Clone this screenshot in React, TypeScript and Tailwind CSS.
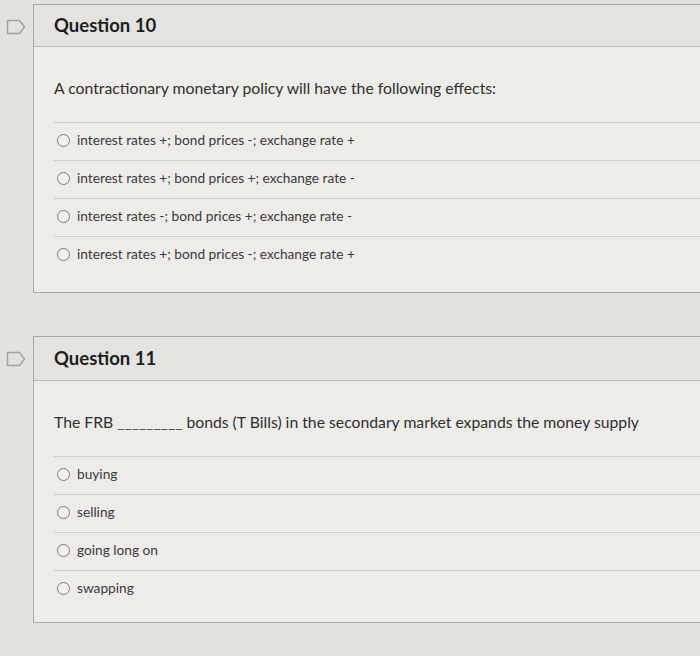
import React from "react"

interface QuestionProps {
  title: string
  prompt: React.ReactNode
  options: string[]
  headerH: string
  bottomPad: string
}

function Flag() {
  return (
    <svg width="20" height="16" viewBox="0 0 20 16" className="block">
      <path
        d="M1.5 1.5 H13.5 L18.5 8 L13.5 14.5 H1.5 Z"
        fill="none"
        stroke="#a3a3a1"
        strokeWidth="1.5"
        strokeLinejoin="round"
      />
    </svg>
  )
}

function Question({ title, prompt, options, headerH, bottomPad }: QuestionProps) {
  return (
    <div className="flex">
      {/* flag column */}
      <div className="w-[33px] shrink-0 pl-[6px] pt-[15px]">
        <Flag />
      </div>

      <div className="flex-1 border border-r-0 border-[#a9a9a6] bg-[#edece9]">
        <div className={`${headerH} flex items-center pl-[20px] bg-[#e4e3e0] border-b border-[#bdbcb9]`}>
          <h2 className="text-[18.5px] font-bold text-[#1e1e1e]">{title}</h2>
        </div>

        <div className={`pl-[20px] pt-[31px] ${bottomPad}`}>
          <p className="text-[15.75px] leading-[20px] text-[#2f2f2f]">{prompt}</p>

          <div className="mt-[24px]">
            {options.map((opt, i) => (
              <div key={i} className="border-t border-[#cfcecb] pt-[8px] pb-[11px] flex items-center">
                <span className="ml-[3px] w-[13px] h-[13px] rounded-full border border-[#7b7b79] bg-[#f2f1ee] shrink-0" />
                <span className="ml-[7px] text-[13.7px] leading-[18px] text-[#3a3a3a]">{opt}</span>
              </div>
            ))}
          </div>
        </div>
      </div>
    </div>
  )
}

export default function App() {
  return (
    <div
      className="w-[700px] h-[656px] overflow-hidden bg-[#e3e2df] pt-[4px]"
      style={{ fontFamily: "Lato, 'Open Sans', sans-serif" }}
    >
      <Question
        title="Question 10"
        prompt="A contractionary monetary policy will have the following effects:"
        options={[
          "interest rates +; bond prices -; exchange rate +",
          "interest rates +; bond prices +; exchange rate -",
          "interest rates -; bond prices +; exchange rate -",
          "interest rates +; bond prices -; exchange rate +",
        ]}
        headerH="h-[42px]"
        bottomPad="pb-[18px]"
      />

      <div className="h-[43px]" />

      <Question
        title="Question 11"
        prompt={
          <>
            The FRB <span className="text-[#555]">_________</span> bonds (T Bills) in the secondary market expands the
            money supply
          </>
        }
        options={["buying", "selling", "going long on", "swapping"]}
        headerH="h-[44px]"
        bottomPad="pb-[14px]"
      />
    </div>
  )
}
